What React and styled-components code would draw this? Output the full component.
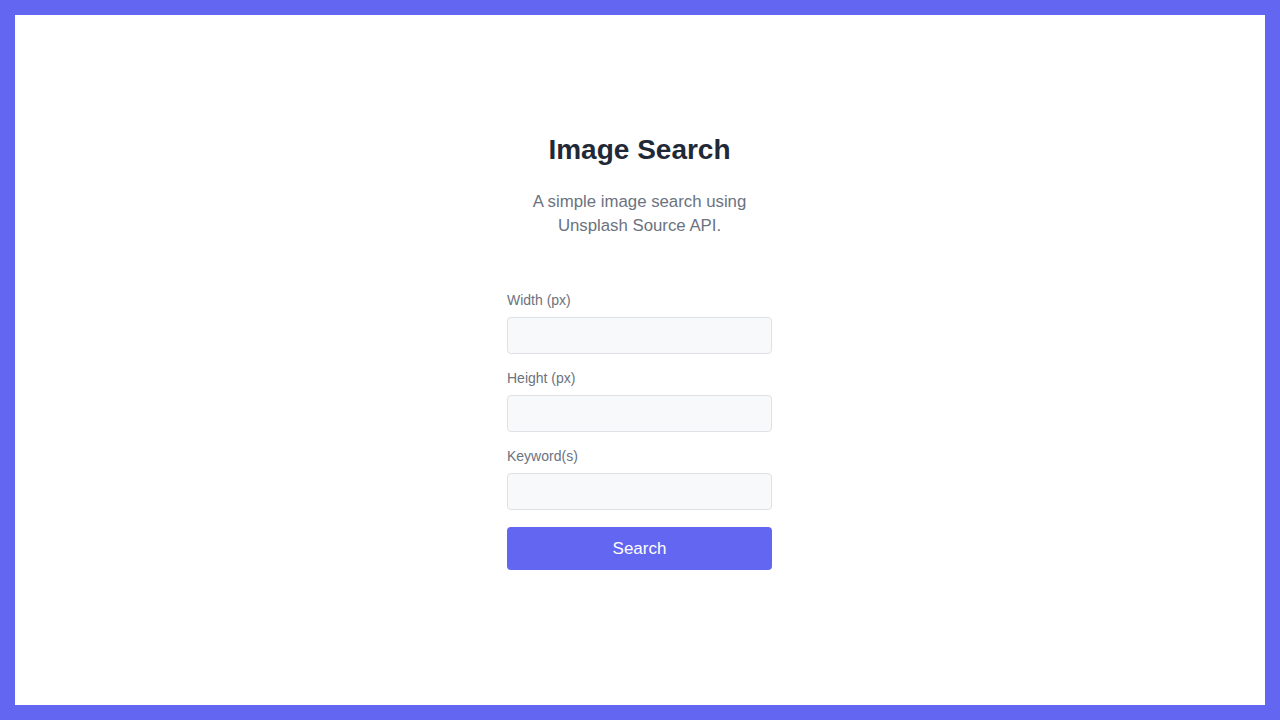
import styled, { createGlobalStyle } from 'styled-components';

const GlobalStyle = createGlobalStyle`
    html, body {
        margin: 0;
        padding: 0;
    }

    body {
        background: #6366f1;
        font-family: "Liberation Sans", Arial, sans-serif;
    }
`;

const Frame = styled.div`
    padding: 15px;
    height: 720px;
    box-sizing: border-box;
`;

const Page = styled.main`
    background: #ffffff;
    height: 100%;
    display: flex;
    flex-direction: column;
    align-items: center;
    padding-top: 117px;
    padding-right: 1px;
    box-sizing: border-box;
`;

const Header = styled.header`
    text-align: center;
    display: flex;
    flex-direction: column;
    align-items: center;
`;

const Title = styled.h1`
    margin: 0;
    font-size: 28px;
    line-height: 36px;
    font-weight: 700;
    color: #1f2937;
`;

const Subtitle = styled.p`
    margin: 22px 0 0;
    max-width: 224px;
    font-size: 16.8px;
    line-height: 24px;
    color: #6b7280;
`;

const Form = styled.form`
    width: 265px;
    margin-top: 52px;
    display: flex;
    flex-direction: column;
`;

const Field = styled.div`
    display: flex;
    flex-direction: column;
    margin-bottom: 14px;
`;

const Label = styled.label`
    font-size: 14px;
    line-height: 20px;
    color: #6b7280;
    margin-bottom: 7px;
`;

const Input = styled.input`
    height: 37px;
    box-sizing: border-box;
    border: 1px solid #e0e1e5;
    border-radius: 4px;
    background: #f8f9fa;
    padding: 0 10px;
    font-size: 15px;
    font-family: inherit;
    outline: none;
`;

const Button = styled.button`
    margin-top: 3px;
    height: 43px;
    border: none;
    border-radius: 4px;
    background: #6366f1;
    color: #ffffff;
    font-size: 17px;
    font-family: inherit;
    cursor: pointer;
`;

const fields = [
    { id: 'width', label: 'Width (px)' },
    { id: 'height', label: 'Height (px)' },
    { id: 'keywords', label: 'Keyword(s)' },
];

const App = () => {
    return (
        <>
            <GlobalStyle />
            <Frame>
                <Page>
                    <Header>
                        <Title>Image Search</Title>
                        <Subtitle>A simple image search using Unsplash Source API.</Subtitle>
                    </Header>
                    <Form onSubmit={e => e.preventDefault()}>
                        {fields.map(f => (
                            <Field key={f.id}>
                                <Label htmlFor={f.id}>{f.label}</Label>
                                <Input id={f.id} type="text" />
                            </Field>
                        ))}
                        <Button type="submit">Search</Button>
                    </Form>
                </Page>
            </Frame>
        </>
    );
};

export default App;
